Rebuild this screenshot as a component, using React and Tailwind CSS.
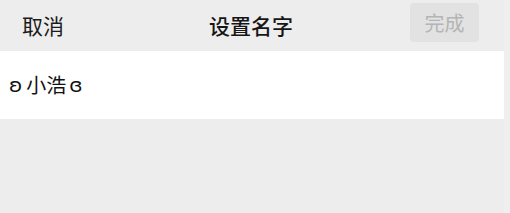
export default function App() {
  return (
    <div
      className="flex h-[213px] w-[510px] bg-[#ededed]"
      style={{ fontFamily: '"Noto Sans CJK SC", "Noto Sans", sans-serif' }}
    >
      <div className="flex w-[504px] flex-col">
        {/* Header */}
        <div className="grid h-[51px] grid-cols-[1fr_auto_1fr] items-center pl-[22px] pr-[25px]">
          <button className="justify-self-start text-[21px] leading-none text-[#1b1b1b]">取消</button>
          <h1 className="ml-[1px] text-[21px] font-medium leading-none text-[#161616]">设置名字</h1>
          <button className="mb-[6px] flex h-[39px] w-[69px] items-center justify-center justify-self-end rounded-[4px] bg-[#e2e2e2] text-[20px] leading-none text-[#b4b4b4]">
            完成
          </button>
        </div>

        {/* Input */}
        <div className="flex h-[68px] items-center bg-white pl-[9px]">
          <span className="flex items-center text-[20px] leading-none text-[#111]">
            <span className="mr-[4px]" style={{ fontFamily: '"DejaVu Sans", sans-serif' }}>ʚ</span>
            小浩
            <span className="ml-[3px]" style={{ fontFamily: '"DejaVu Sans", sans-serif' }}>ɞ</span>
          </span>
        </div>
      </div>
      <div className="w-[6px] bg-[#efefef]" />
    </div>
  );
}
